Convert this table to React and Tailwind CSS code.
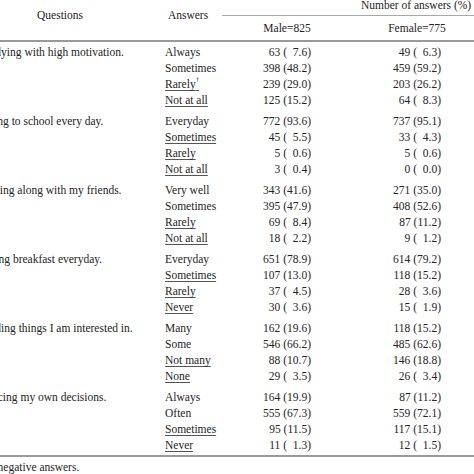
import React from "react";

const S = () => <span className="inline-block w-[0.5em]"></span>;

const groups = [
  {
    q: "Studying with high motivation.",
    rows: [
      ["Always", false, "63", "7.6", "49", "6.3"],
      ["Sometimes", false, "398", "48.2", "459", "59.2"],
      ["Rarely", true, "239", "29.0", "203", "26.2", true],
      ["Not at all", true, "125", "15.2", "64", "8.3"],
    ],
  },
  {
    q: "Going to school every day.",
    rows: [
      ["Everyday", false, "772", "93.6", "737", "95.1"],
      ["Sometimes", true, "45", "5.5", "33", "4.3"],
      ["Rarely", true, "5", "0.6", "5", "0.6"],
      ["Not at all", true, "3", "0.4", "0", "0.0"],
    ],
  },
  {
    q: "Getting along with my friends.",
    rows: [
      ["Very well", false, "343", "41.6", "271", "35.0"],
      ["Sometimes", false, "395", "47.9", "408", "52.6"],
      ["Rarely", true, "69", "8.4", "87", "11.2"],
      ["Not at all", true, "18", "2.2", "9", "1.2"],
    ],
  },
  {
    q: "Eating breakfast everyday.",
    rows: [
      ["Everyday", false, "651", "78.9", "614", "79.2"],
      ["Sometimes", true, "107", "13.0", "118", "15.2"],
      ["Rarely", true, "37", "4.5", "28", "3.6"],
      ["Never", true, "30", "3.6", "15", "1.9"],
    ],
  },
  {
    q: "Finding things I am interested in.",
    rows: [
      ["Many", false, "162", "19.6", "118", "15.2"],
      ["Some", false, "546", "66.2", "485", "62.6"],
      ["Not many", true, "88", "10.7", "146", "18.8"],
      ["None", true, "29", "3.5", "26", "3.4"],
    ],
  },
  {
    q: "Voicing my own decisions.",
    pad: "pl-[2px]",
    rows: [
      ["Always", false, "164", "19.9", "87", "11.2"],
      ["Often", false, "555", "67.3", "559", "72.1"],
      ["Sometimes", true, "95", "11.5", "117", "15.1"],
      ["Never", true, "11", "1.3", "12", "1.5"],
    ],
  },
];

function Val({ n, p }) {
  return (
    <span className="whitespace-pre">
      {n} ({p.length < 4 ? <S /> : null}
      {p})
    </span>
  );
}

export default function App() {
  return (
    <div className="w-[474px] h-[474px] overflow-hidden bg-white text-[#242424] font-['Liberation_Serif',serif] text-[11.5px]">
      <div className="-ml-[20px] w-[502px]">
        <div className="grid grid-cols-[170px_72px_130px_130px] grid-rows-[16px_24px] h-[40px]">
          <div className="col-start-1 row-start-1 row-span-2 flex items-center justify-center pb-[8px] pr-[10px]">
            Questions
          </div>
          <div className="col-start-2 row-start-1 row-span-2 flex items-center justify-center pb-[8px] pl-[4px]">
            Answers
          </div>
          <div className="col-start-3 col-span-2 row-start-1 border-b border-[#a8a8a8] pl-[139px] leading-[11px] whitespace-nowrap">
            Number of answers (%)
          </div>
          <div className="col-start-3 row-start-2 flex items-center justify-center pt-[1px]">
            Male=825
          </div>
          <div className="col-start-4 row-start-2 flex items-center justify-center pt-[1px]">
            Female=775
          </div>
        </div>
        <div className="h-[2px] bg-[#9a9a9a]"></div>
        <div className="pt-[2px]">
          {groups.map((g, gi) => (
            <div key={gi} className={gi === 0 ? "" : "mt-[5px]"}>
              {g.rows.map((r, ri) => (
                <div
                  key={ri}
                  className="grid grid-cols-[170px_72px_130px_130px] h-[16px] leading-[16px] whitespace-nowrap"
                >
                  <div className={g.pad || ""}>{ri === 0 ? g.q : ""}</div>
                  <div className="pl-[15px]">
                    <span
                      className={
                        r[1]
                          ? "underline decoration-[#555] decoration-1 underline-offset-[2px]"
                          : ""
                      }
                    >
                      {r[0]}
                      {r[6] ? <sup className="text-[7px] align-[4px]">†</sup> : null}
                    </span>
                  </div>
                  <div className="text-right pr-[41px]">
                    <Val n={r[2]} p={r[3]} />
                  </div>
                  <div className="text-right pr-[41px]">
                    <Val n={r[4]} p={r[5]} />
                  </div>
                </div>
              ))}
            </div>
          ))}
        </div>
        <div className="mt-[2px] h-[2px] bg-[#9a9a9a]"></div>
      </div>
      <div className="-ml-[66px] mt-[2px] h-[16px] leading-[16px] whitespace-nowrap">
        †Underlined: negative answers.
      </div>
    </div>
  );
}
